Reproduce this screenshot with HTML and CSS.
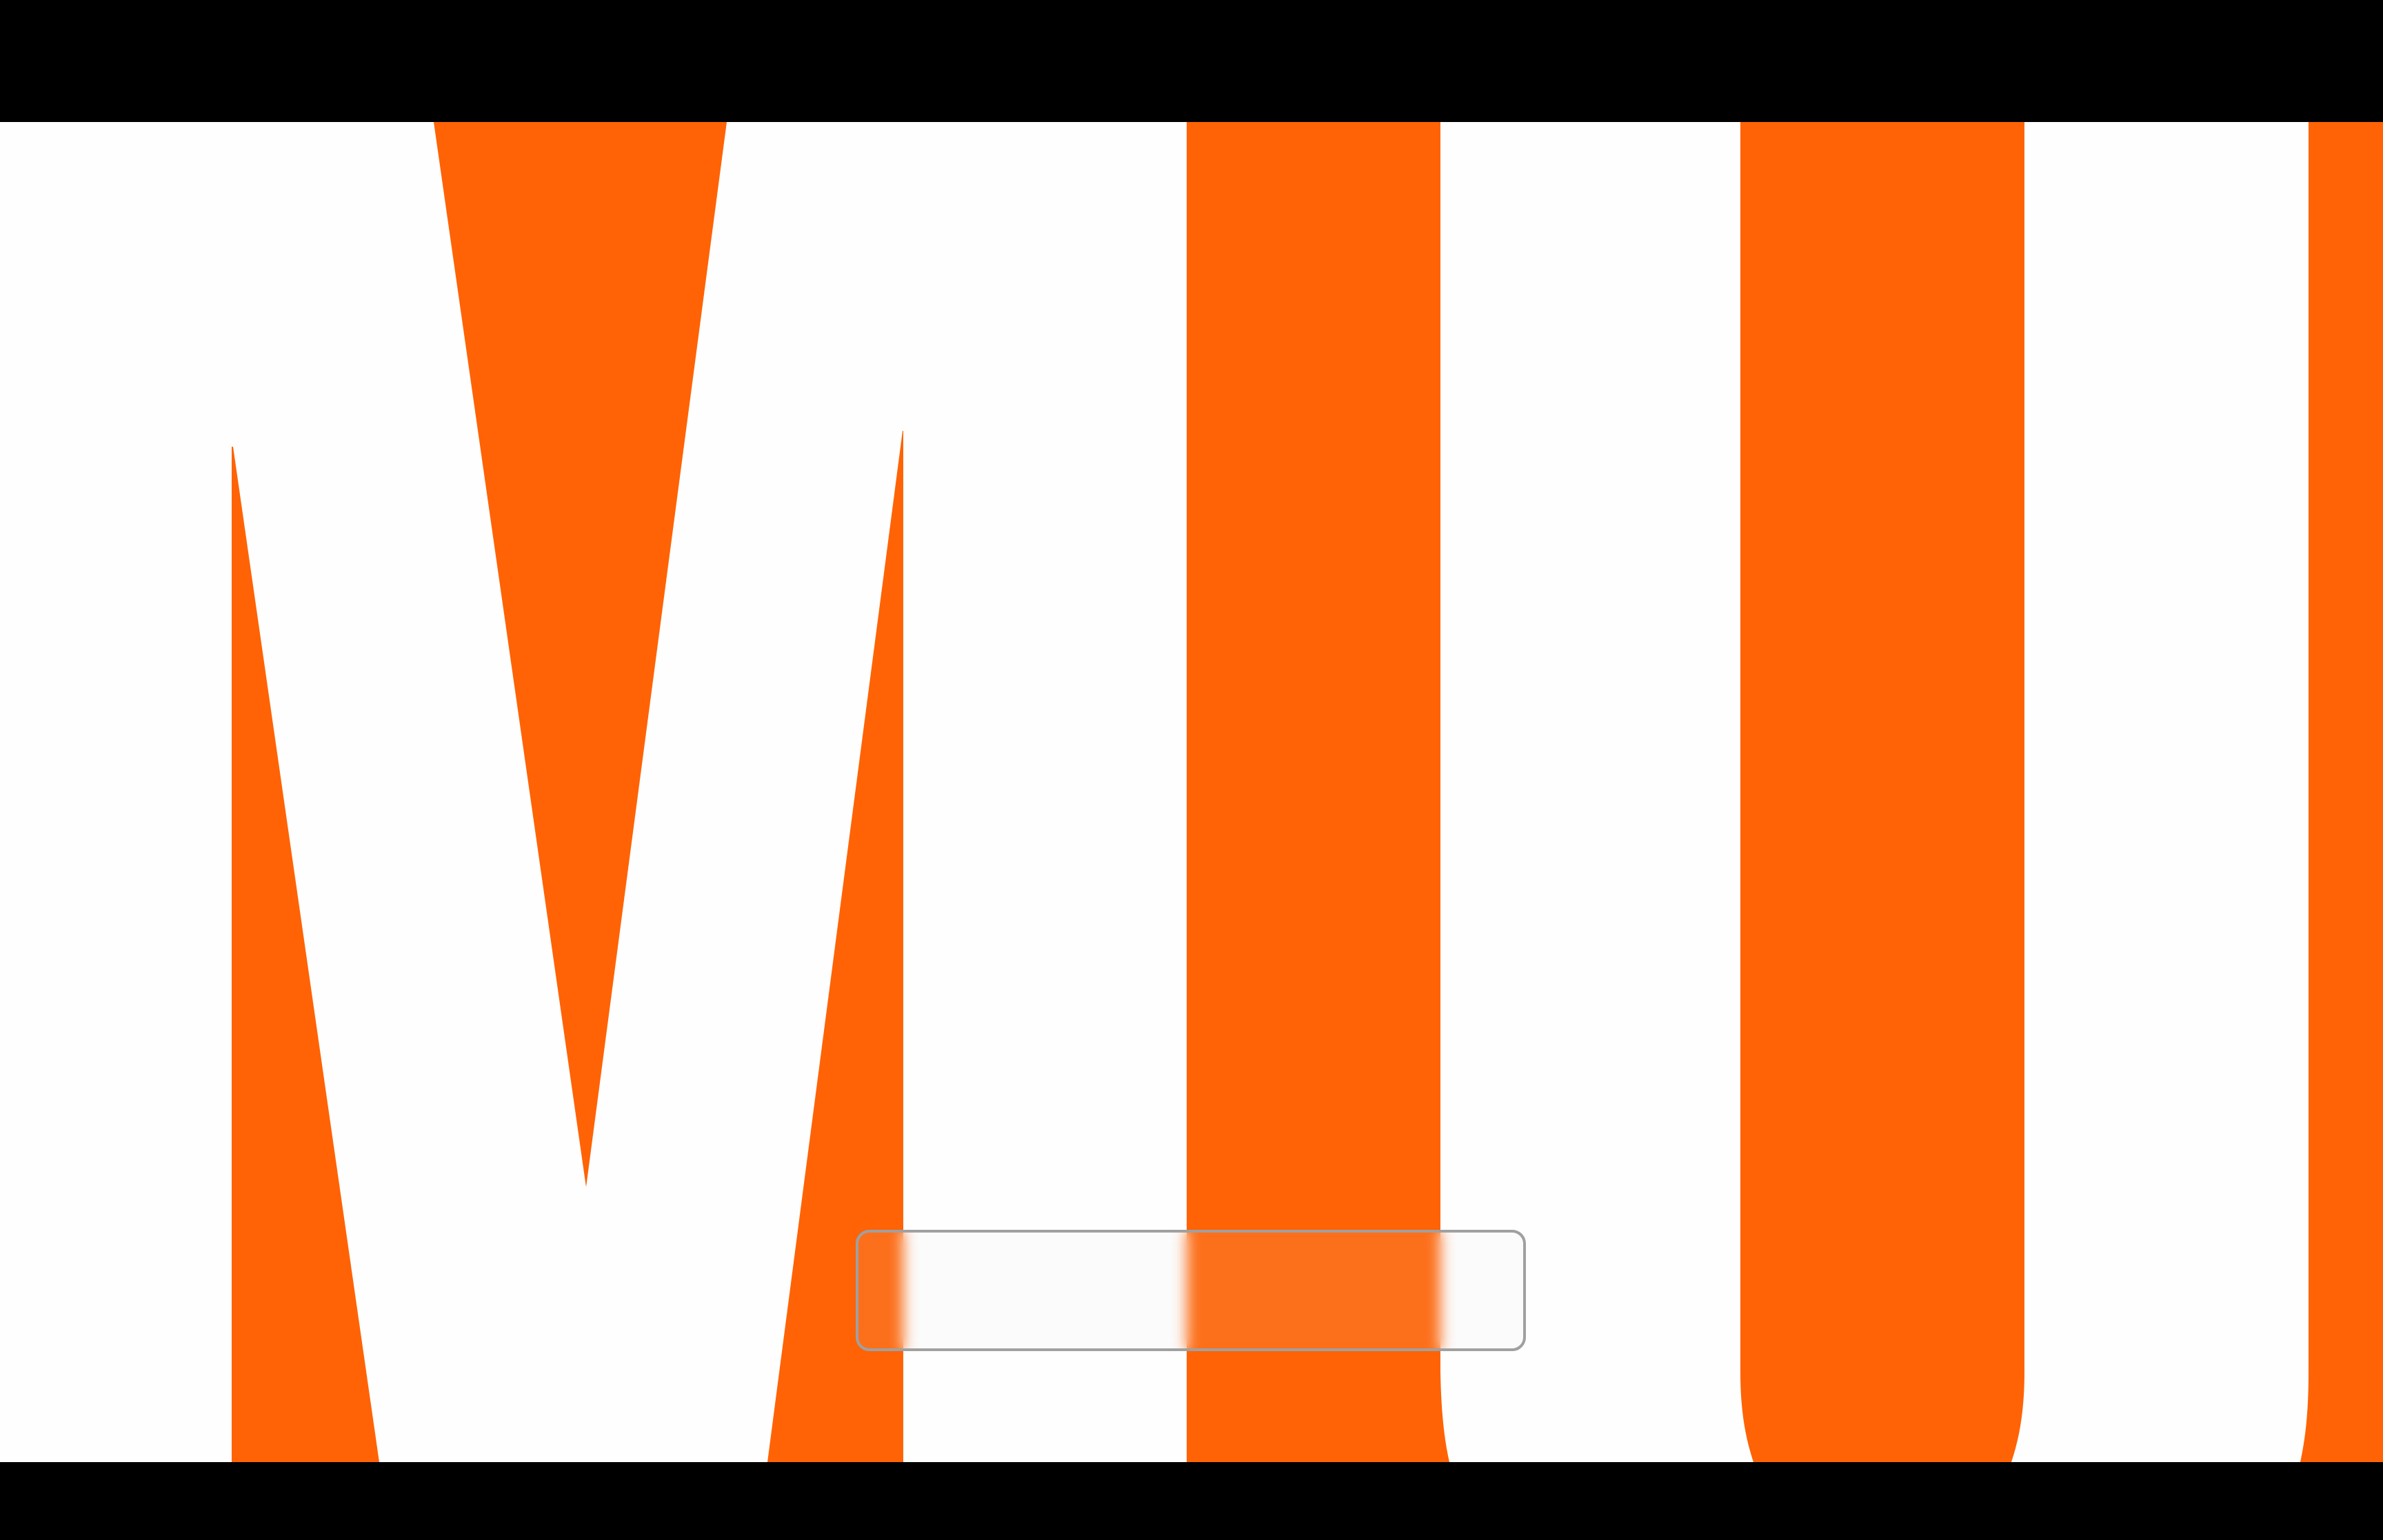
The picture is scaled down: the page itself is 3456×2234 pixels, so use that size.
FILE: index.html
```html
<!DOCTYPE html>
<html lang="en">
<head>
    <meta charset="UTF-8">
    <meta name="viewport" content="width=device-width, initial-scale=1.0">
    <title>Video player</title>
    <link rel="stylesheet" href="styles.css">
</head>
<body>

    <div class="player">
        <div class="frame">
            <svg class="artwork" viewBox="0 177 3456 1944" aria-hidden="true">
                <rect class="paper" x="0" y="177" width="3456" height="1944"/>
                <!-- wedges around the first shape -->
                <polygon class="ink" points="629,177 1054,177 850,1722"/>
                <polygon class="ink" points="336,2121 336,648 338,648 550,2121"/>
                <polygon class="ink" points="1310,2121 1113,2121 1309,625 1310,625"/>
                <!-- stripes, curving in near the bottom -->
                <path class="ink" d="M1721 177H2089V1990C2090 2045 2094 2085 2102 2121H1721Z"/>
                <path class="ink" d="M2524 177H2936V1990C2936 2045 2929 2085 2917 2121H2543C2531 2085 2524 2045 2524 1990Z"/>
                <path class="ink" d="M3348 177H3456V2121H3336C3344 2085 3348 2045 3348 1990Z"/>
            </svg>
            <div class="caption"></div>
        </div>
    </div>

</body>
</html>
```

FILE: styles.css
```css
html, body {
    margin: 0;
    height: 100%;
    background-color: #000;
}
body {
    overflow: hidden;
}
.player {
    height: 100vh;
    padding-top: 177px;
    box-sizing: border-box;
}
.frame {
    position: relative;
    height: 1944px;
}
.artwork {
    display: block;
    width: 100%;
    height: 100%;
}
.paper {
    fill: #fefefe;
}
.ink {
    fill: #ff6305;
}
.caption {
    position: absolute;
    left: 1241px;
    top: 1607px;
    width: 972px;
    height: 176px;
    box-sizing: border-box;
    border: 4px solid #a0a0a0;
    border-radius: 20px;
    background: rgba(225, 225, 225, 0.1);
    backdrop-filter: blur(10px);
}
```
